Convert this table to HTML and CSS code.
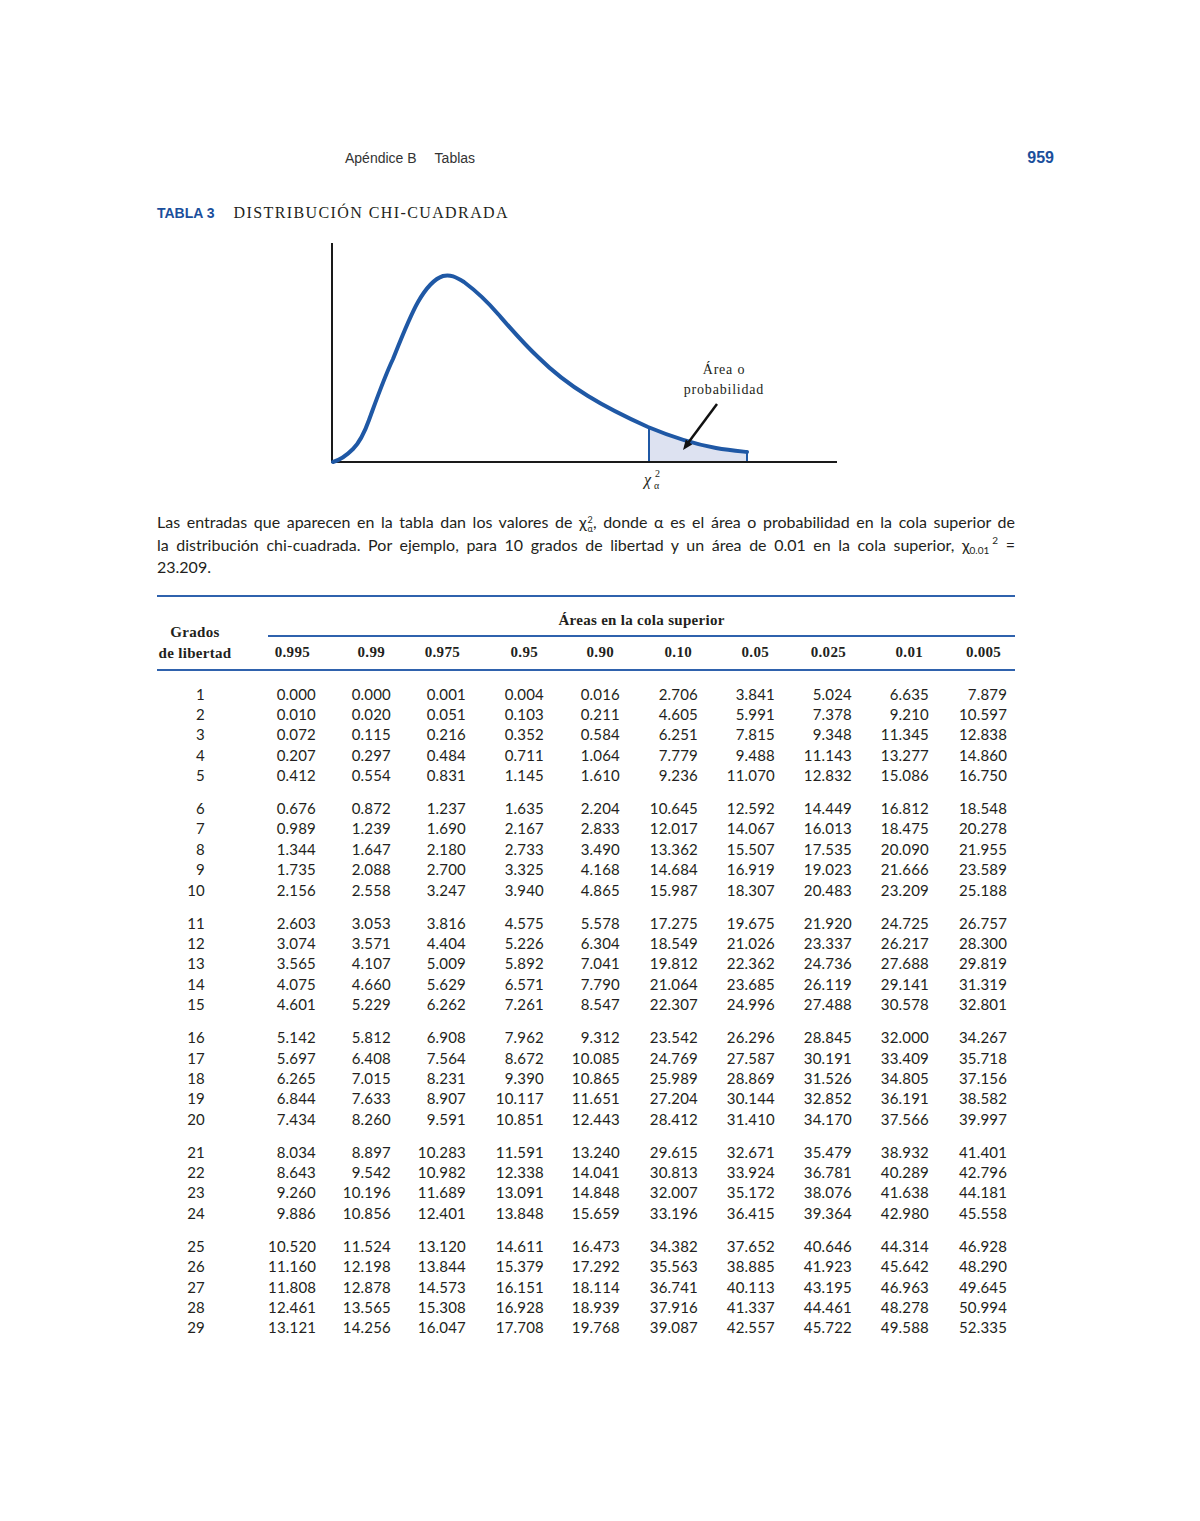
FILE: index.html
```html
<!DOCTYPE html>
<html lang="es">
<head>
<meta charset="utf-8">
<title>Tabla 3 — Distribución chi-cuadrada</title>
<link rel="stylesheet" href="styles.css">
</head>
<body>
<div class="page">
  <header class="running">
    <div class="section"><span>Apéndice B</span><span>Tablas</span></div>
    <div class="folio">959</div>
  </header>

  <h1 class="title"><span class="tnum">TABLA 3</span><span class="tname">DISTRIBUCIÓN CHI-CUADRADA</span></h1>

  <svg class="chart" width="520" height="252" viewBox="0 0 520 252">
    <polygon points="323,222 323,188 327,190 347,198 367,204 387,208 407,211 421,212 421,222" fill="#dde2f1"/>
    <path d="M323 188 V222 M421 212 V222" stroke="#1f58a5" stroke-width="2" fill="none"/>
    <line x1="6" y1="3" x2="6" y2="223" stroke="#1a1a1a" stroke-width="2"/>
    <line x1="5" y1="222" x2="511" y2="222" stroke="#1a1a1a" stroke-width="2"/>
    <path d="M7 222 C14 220 20 216 27 209 C33 203 38 194 43 180 C50 161 58 138 67 119 C75 99 84 76 92 62 C100 48 108 39 117 36 C124 34 130 37 138 42 C150 51 160 60 172 74 C186 90 198 104 212 117 C228 133 244 145 262 156 C283 169 302 178 322 187 C346 197 368 204 390 208 C402 210 412 211 421 212" fill="none" stroke="#1f58a5" stroke-width="4" stroke-linejoin="round" stroke-linecap="round"/>
    <line x1="391" y1="164" x2="362" y2="203" stroke="#111" stroke-width="2.5"/>
    <polygon points="357,210 366.2,204.4 359.8,199.6" fill="#111"/>
    <text class="lbl" x="398" y="134">Área o</text>
    <text class="lbl" x="398" y="154">probabilidad</text>
    <text class="chi" x="318" y="245">χ</text>
    <text class="chis" x="329" y="237">2</text>
    <text class="chis" x="328" y="249">α</text>
  </svg>

  <p class="intro">
    <span class="ln">Las entradas que aparecen en la tabla dan los valores de χ<span class="sc"><span class="scu">2</span><span class="scl">α</span></span>, donde α es el área o probabilidad en la cola superior de</span>
    <span class="ln">la distribución chi-cuadrada. Por ejemplo, para 10 grados de libertad y un área de 0.01 en la cola superior, χ<sub class="s1">0.01</sub><sup class="s2">2</sup> =</span>
    <span class="ln">23.209.</span>
  </p>

  <table class="chitab">
    <colgroup>
      <col class="c0"><col class="c1"><col class="c2"><col class="c3"><col class="c4"><col class="c5"><col class="c6"><col class="c7"><col class="c8"><col class="c9"><col class="c10">
    </colgroup>
    <thead>
      <tr class="h1">
        <th class="df" rowspan="2">Grados<br>de libertad</th>
        <th class="areas" colspan="10">Áreas en la cola superior</th>
      </tr>
      <tr class="h2">
        <th>0.995</th><th>0.99</th><th>0.975</th><th>0.95</th><th>0.90</th><th>0.10</th><th>0.05</th><th>0.025</th><th>0.01</th><th>0.005</th>
      </tr>
    </thead>
    <tbody>
      <tr><td>1</td><td>0.000</td><td>0.000</td><td>0.001</td><td>0.004</td><td>0.016</td><td>2.706</td><td>3.841</td><td>5.024</td><td>6.635</td><td>7.879</td></tr>
      <tr><td>2</td><td>0.010</td><td>0.020</td><td>0.051</td><td>0.103</td><td>0.211</td><td>4.605</td><td>5.991</td><td>7.378</td><td>9.210</td><td>10.597</td></tr>
      <tr><td>3</td><td>0.072</td><td>0.115</td><td>0.216</td><td>0.352</td><td>0.584</td><td>6.251</td><td>7.815</td><td>9.348</td><td>11.345</td><td>12.838</td></tr>
      <tr><td>4</td><td>0.207</td><td>0.297</td><td>0.484</td><td>0.711</td><td>1.064</td><td>7.779</td><td>9.488</td><td>11.143</td><td>13.277</td><td>14.860</td></tr>
      <tr><td>5</td><td>0.412</td><td>0.554</td><td>0.831</td><td>1.145</td><td>1.610</td><td>9.236</td><td>11.070</td><td>12.832</td><td>15.086</td><td>16.750</td></tr>
    </tbody>
    <tbody>
      <tr><td>6</td><td>0.676</td><td>0.872</td><td>1.237</td><td>1.635</td><td>2.204</td><td>10.645</td><td>12.592</td><td>14.449</td><td>16.812</td><td>18.548</td></tr>
      <tr><td>7</td><td>0.989</td><td>1.239</td><td>1.690</td><td>2.167</td><td>2.833</td><td>12.017</td><td>14.067</td><td>16.013</td><td>18.475</td><td>20.278</td></tr>
      <tr><td>8</td><td>1.344</td><td>1.647</td><td>2.180</td><td>2.733</td><td>3.490</td><td>13.362</td><td>15.507</td><td>17.535</td><td>20.090</td><td>21.955</td></tr>
      <tr><td>9</td><td>1.735</td><td>2.088</td><td>2.700</td><td>3.325</td><td>4.168</td><td>14.684</td><td>16.919</td><td>19.023</td><td>21.666</td><td>23.589</td></tr>
      <tr><td>10</td><td>2.156</td><td>2.558</td><td>3.247</td><td>3.940</td><td>4.865</td><td>15.987</td><td>18.307</td><td>20.483</td><td>23.209</td><td>25.188</td></tr>
    </tbody>
    <tbody>
      <tr><td>11</td><td>2.603</td><td>3.053</td><td>3.816</td><td>4.575</td><td>5.578</td><td>17.275</td><td>19.675</td><td>21.920</td><td>24.725</td><td>26.757</td></tr>
      <tr><td>12</td><td>3.074</td><td>3.571</td><td>4.404</td><td>5.226</td><td>6.304</td><td>18.549</td><td>21.026</td><td>23.337</td><td>26.217</td><td>28.300</td></tr>
      <tr><td>13</td><td>3.565</td><td>4.107</td><td>5.009</td><td>5.892</td><td>7.041</td><td>19.812</td><td>22.362</td><td>24.736</td><td>27.688</td><td>29.819</td></tr>
      <tr><td>14</td><td>4.075</td><td>4.660</td><td>5.629</td><td>6.571</td><td>7.790</td><td>21.064</td><td>23.685</td><td>26.119</td><td>29.141</td><td>31.319</td></tr>
      <tr><td>15</td><td>4.601</td><td>5.229</td><td>6.262</td><td>7.261</td><td>8.547</td><td>22.307</td><td>24.996</td><td>27.488</td><td>30.578</td><td>32.801</td></tr>
    </tbody>
    <tbody>
      <tr><td>16</td><td>5.142</td><td>5.812</td><td>6.908</td><td>7.962</td><td>9.312</td><td>23.542</td><td>26.296</td><td>28.845</td><td>32.000</td><td>34.267</td></tr>
      <tr><td>17</td><td>5.697</td><td>6.408</td><td>7.564</td><td>8.672</td><td>10.085</td><td>24.769</td><td>27.587</td><td>30.191</td><td>33.409</td><td>35.718</td></tr>
      <tr><td>18</td><td>6.265</td><td>7.015</td><td>8.231</td><td>9.390</td><td>10.865</td><td>25.989</td><td>28.869</td><td>31.526</td><td>34.805</td><td>37.156</td></tr>
      <tr><td>19</td><td>6.844</td><td>7.633</td><td>8.907</td><td>10.117</td><td>11.651</td><td>27.204</td><td>30.144</td><td>32.852</td><td>36.191</td><td>38.582</td></tr>
      <tr><td>20</td><td>7.434</td><td>8.260</td><td>9.591</td><td>10.851</td><td>12.443</td><td>28.412</td><td>31.410</td><td>34.170</td><td>37.566</td><td>39.997</td></tr>
    </tbody>
    <tbody>
      <tr><td>21</td><td>8.034</td><td>8.897</td><td>10.283</td><td>11.591</td><td>13.240</td><td>29.615</td><td>32.671</td><td>35.479</td><td>38.932</td><td>41.401</td></tr>
      <tr><td>22</td><td>8.643</td><td>9.542</td><td>10.982</td><td>12.338</td><td>14.041</td><td>30.813</td><td>33.924</td><td>36.781</td><td>40.289</td><td>42.796</td></tr>
      <tr><td>23</td><td>9.260</td><td>10.196</td><td>11.689</td><td>13.091</td><td>14.848</td><td>32.007</td><td>35.172</td><td>38.076</td><td>41.638</td><td>44.181</td></tr>
      <tr><td>24</td><td>9.886</td><td>10.856</td><td>12.401</td><td>13.848</td><td>15.659</td><td>33.196</td><td>36.415</td><td>39.364</td><td>42.980</td><td>45.558</td></tr>
    </tbody>
    <tbody>
      <tr><td>25</td><td>10.520</td><td>11.524</td><td>13.120</td><td>14.611</td><td>16.473</td><td>34.382</td><td>37.652</td><td>40.646</td><td>44.314</td><td>46.928</td></tr>
      <tr><td>26</td><td>11.160</td><td>12.198</td><td>13.844</td><td>15.379</td><td>17.292</td><td>35.563</td><td>38.885</td><td>41.923</td><td>45.642</td><td>48.290</td></tr>
      <tr><td>27</td><td>11.808</td><td>12.878</td><td>14.573</td><td>16.151</td><td>18.114</td><td>36.741</td><td>40.113</td><td>43.195</td><td>46.963</td><td>49.645</td></tr>
      <tr><td>28</td><td>12.461</td><td>13.565</td><td>15.308</td><td>16.928</td><td>18.939</td><td>37.916</td><td>41.337</td><td>44.461</td><td>48.278</td><td>50.994</td></tr>
      <tr><td>29</td><td>13.121</td><td>14.256</td><td>16.047</td><td>17.708</td><td>19.768</td><td>39.087</td><td>42.557</td><td>45.722</td><td>49.588</td><td>52.335</td></tr>
    </tbody>
  </table>
</div>
</body>
</html>
```

FILE: styles.css
```css
html, body {
  margin: 0;
  background: #ffffff;
}

body {
  color: #231f20;
  font-family: "Lato", "Liberation Sans", sans-serif;
}

.page {
  width: 858px;
  padding: 148px 0 0 157px;
}

/* running head */
.running {
  display: flex;
  justify-content: space-between;
  align-items: baseline;
  margin-right: -39px;
  padding-left: 188px;
  line-height: 20px;
}

.section {
  display: flex;
  gap: 18px;
  font-family: "Liberation Sans", sans-serif;
  font-size: 14px;
  color: #333;
}

.folio {
  font-family: "Liberation Sans", sans-serif;
  font-weight: bold;
  font-size: 16px;
  color: #1b4f9c;
}

/* title */
.title {
  display: flex;
  align-items: baseline;
  gap: 19px;
  margin: 35px 0 0;
  line-height: 20px;
  font-weight: normal;
}

.tnum {
  font-family: "Liberation Sans", sans-serif;
  font-weight: bold;
  font-size: 14px;
  color: #1b4f9c;
}

.tname {
  font-family: "Liberation Serif", serif;
  font-size: 16px;
  letter-spacing: 1.4px;
  color: #231f20;
}

/* chart */
.chart {
  display: block;
  margin: 17px 0 0 169px;
}

.chart .lbl {
  font-family: "Liberation Serif", serif;
  font-size: 14px;
  letter-spacing: 0.8px;
  fill: #231f20;
  text-anchor: middle;
}

.chart .chi {
  font-family: "Liberation Serif", serif;
  font-style: italic;
  font-size: 16px;
  fill: #231f20;
}

.chart .chis {
  font-family: "Liberation Serif", serif;
  font-size: 10px;
  fill: #231f20;
}

/* intro paragraph */
.intro {
  margin: 19px 0 0;
  font-size: 16px;
  line-height: 22.5px;
  color: #231f20;
}

.intro .ln {
  display: block;
  height: 22.5px;
  text-align: justify;
  text-align-last: justify;
  white-space: nowrap;
}

.intro .ln:last-child {
  text-align-last: auto;
}

.sc {
  display: inline-block;
  vertical-align: -4px;
  margin-left: 1px;
  font-size: 9px;
  line-height: 9.5px;
}

.scu, .scl {
  display: block;
}

.s1 {
  font-size: 10px;
  line-height: 0;
  vertical-align: -3px;
}

.s2 {
  font-size: 10px;
  line-height: 0;
  vertical-align: 7px;
  margin-left: 3px;
}

/* table */
.chitab {
  margin-top: 16px;
  width: 858px;
  table-layout: fixed;
  border-collapse: collapse;
  font-size: 15px;
  color: #231f20;
}

.c0 { width: 111px; }
.c1 { width: 56px; }
.c2 { width: 75px; }
.c3 { width: 75px; }
.c4 { width: 78px; }
.c5 { width: 76px; }
.c6 { width: 78px; }
.c7 { width: 77px; }
.c8 { width: 77px; }
.c9 { width: 77px; }
.c10 { width: 78px; }

.chitab thead {
  border-top: 2px solid #2f62ad;
}

.chitab th {
  font-family: "Liberation Serif", serif;
  font-weight: bold;
  font-size: 15px;
  letter-spacing: 0.3px;
  padding: 0;
  color: #231f20;
}

.chitab th.df {
  text-align: center;
  vertical-align: bottom;
  line-height: 21px;
  padding: 0 35px 5px 0;
  border-bottom: 2px solid #2f62ad;
}

.chitab th.areas {
  height: 40px;
  text-align: center;
  vertical-align: middle;
  padding-top: 9px;
  box-sizing: border-box;
  border-bottom: 2px solid #2f62ad;
}

.chitab .h2 th {
  height: 32px;
  text-align: right;
  padding-right: 14px;
  vertical-align: middle;
  border-bottom: 2px solid #2f62ad;
}

.chitab td {
  padding: 0 8px 0 0;
  line-height: 20.4px;
  text-align: right;
  letter-spacing: 0.2px;
  white-space: nowrap;
}

.chitab td:first-child {
  padding-right: 63px;
}

.chitab tbody tr:first-child td {
  padding-top: 12.5px;
}

.chitab thead + tbody tr:first-child td {
  padding-top: 13px;
}
```
